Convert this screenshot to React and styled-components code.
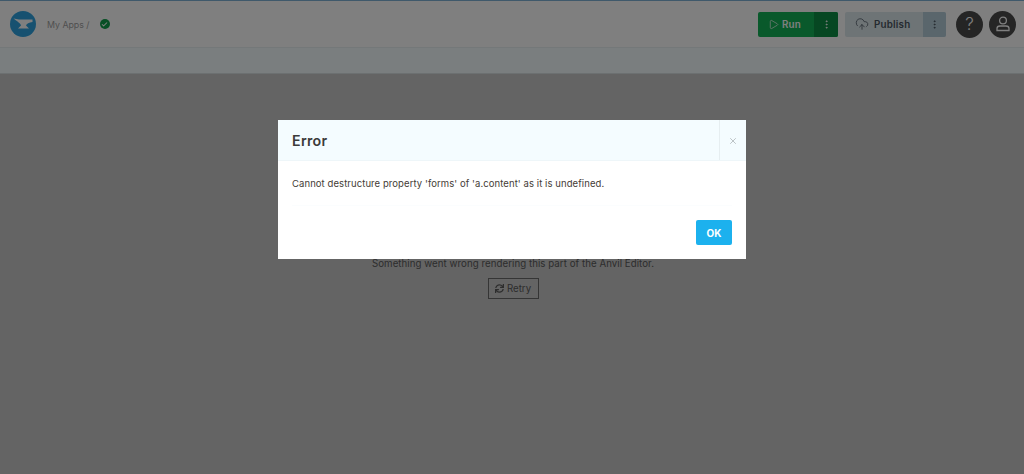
import React from "react";
import styled, { createGlobalStyle } from "styled-components";
import { Play, CloudUpload, EllipsisVertical, X, Check } from "lucide-react";
import { FaSync } from "react-icons/fa";

const GlobalStyle = createGlobalStyle`
  html, body {
    margin: 0;
    padding: 0;
    height: 100%;
    overflow: hidden;
    font-family: Inter, "Open Sans", "Liberation Sans", sans-serif;
    background: #c8c8c8;
  }
`;

const Page = styled.div`
  height: 474px;
  display: flex;
  flex-direction: column;
`;

const TopBar = styled.header`
  height: 46px;
  flex: none;
  display: flex;
  align-items: center;
  justify-content: space-between;
  padding: 0 8px 0 10px;
  background: #ffffff;
  border-top: 1px solid #7fb2d6;
`;

const LeftGroup = styled.div`
  display: flex;
  align-items: center;
`;

const Crumb = styled.span`
  margin-left: 11px;
  font-size: 8.8px;
  color: #a0a0a0;
`;

const SavedDot = styled.span`
  margin-left: 10px;
  width: 10px;
  height: 10px;
  border-radius: 50%;
  background: #10a04c;
  display: flex;
  align-items: center;
  justify-content: center;
  color: #ffffff;
`;

const RightGroup = styled.div`
  display: flex;
  align-items: center;
`;

const SplitButton = styled.div`
  display: flex;
  height: 25px;
  margin-right: ${(p) => p.$gap}px;
  border-radius: 2px;
  overflow: hidden;
  background: ${(p) => p.$bg};
  color: ${(p) => p.$fg};
`;

const MainAction = styled.div`
  width: ${(p) => p.$width}px;
  box-sizing: border-box;
  padding-left: 10px;
  display: flex;
  align-items: center;
  gap: ${(p) => p.$gap}px;
  font-size: 9.8px;
  font-weight: 600;
  letter-spacing: 0.2px;
`;

const MoreAction = styled.div`
  width: ${(p) => p.$width}px;
  display: flex;
  align-items: center;
  justify-content: center;
  background: ${(p) => p.$bg};
`;

const RoundButton = styled.div`
  width: 27px;
  height: 27px;
  margin-left: ${(p) => p.$gap}px;
  border-radius: 50%;
  background: #4a4a4a;
  color: #ffffff;
  display: flex;
  align-items: center;
  justify-content: center;
  font-size: 17px;
  font-weight: 300;
`;

const SubBar = styled.div`
  height: 25px;
  flex: none;
  background: #f4fdff;
  border-top: 1px solid #e8f0f2;
  border-bottom: 1px solid #d8e0e2;
`;

const Main = styled.main`
  flex: 1;
  display: flex;
  flex-direction: column;
  align-items: center;
  padding: 184px 0 0 2px;
  color: #5a5a5a;
`;

const Message = styled.div`
  font-size: 9.7px;
  line-height: 12px;
  letter-spacing: 0.05px;
`;

const RetryButton = styled.div`
  margin-top: 8px;
  width: 51px;
  height: 21px;
  box-sizing: border-box;
  border: 1px solid #6a6a6a;
  display: flex;
  align-items: center;
  justify-content: center;
  gap: 3px;
  font-size: 9.7px;
`;

const Backdrop = styled.div`
  position: fixed;
  inset: 0;
  background: rgba(0, 0, 0, 0.5);
  display: flex;
  justify-content: center;
  align-items: flex-start;
  padding-top: 120px;
`;

const Modal = styled.div`
  width: 468px;
  height: 139px;
  background: #ffffff;
  display: flex;
  flex-direction: column;
`;

const ModalHeader = styled.div`
  height: 41px;
  flex: none;
  box-sizing: border-box;
  display: flex;
  align-items: stretch;
  justify-content: space-between;
  background: #f4fcff;
  border-bottom: 1px solid #eef6f9;
`;

const ModalTitle = styled.h2`
  margin: 0;
  padding-left: 14px;
  align-self: center;
  font-size: 14.2px;
  font-weight: 600;
  color: #3c3b3a;
  letter-spacing: 0.3px;
`;

const CloseCell = styled.div`
  width: 27px;
  box-sizing: border-box;
  padding: 2px 1px 0 0;
  border-left: 1px solid #e6eef1;
  display: flex;
  align-items: center;
  justify-content: center;
  color: #9aa0a4;
`;

const ModalBody = styled.div`
  height: 45px;
  flex: none;
  margin: 0 14px;
  padding-top: 16px;
  box-sizing: border-box;
  font-size: 9.5px;
  line-height: 14px;
  color: #443c36;
  letter-spacing: 0.08px;
  border-bottom: 1px solid #fbfdfe;
`;

const ModalFooter = styled.div`
  flex: 1;
  display: flex;
  justify-content: flex-end;
  padding: 14px 14px 0 0;
`;

const OkButton = styled.div`
  width: 36px;
  height: 25px;
  border-radius: 2px;
  background: #1cb1ee;
  color: #ffffff;
  display: flex;
  align-items: center;
  justify-content: center;
  font-size: 10px;
  font-weight: 700;
`;

const AnvilLogo = () => (
  <svg width="26" height="26" viewBox="0 0 26 26">
    <circle cx="13" cy="13" r="13" fill="#2fa3e0" />
    <path
      d="M3.5 7.5 L9 8.5 H22.5 V11 C19 11.5 16.5 12.5 16 14.5 L19 17.5 H8 L11 14.5 C10.5 12 7 10.5 3.5 7.5 Z"
      fill="#ffffff"
    />
  </svg>
);

const UserIcon = () => (
  <svg width="18" height="18" viewBox="0 0 18 18" fill="none" stroke="#ffffff" strokeWidth="1.3">
    <circle cx="9" cy="5.5" r="3.4" />
    <path d="M3 15.5 V13.5 C3 11.8 4.5 11 6 11 H12 C13.5 11 15 11.8 15 13.5 V15.5 Z" />
  </svg>
);

const App = () => (
  <Page>
    <GlobalStyle />
    <TopBar>
      <LeftGroup>
        <AnvilLogo />
        <Crumb>My Apps /</Crumb>
        <SavedDot>
          <Check size={7} strokeWidth={3.5} />
        </SavedDot>
      </LeftGroup>
      <RightGroup>
        <SplitButton $bg="#12b256" $fg="#ffffff" $gap={7}>
          <MainAction $width={56} $gap={3}>
            <Play size={11} strokeWidth={1.5} />
            Run
          </MainAction>
          <MoreAction $width={24} $bg="#0c8f44">
            <EllipsisVertical size={11} />
          </MoreAction>
        </SplitButton>
        <SplitButton $bg="#dde8ed" $fg="#4a5560" $gap={0}>
          <MainAction $width={78} $gap={5}>
            <CloudUpload size={14} strokeWidth={1.3} />
            Publish
          </MainAction>
          <MoreAction $width={23} $bg="#b4ccd8">
            <EllipsisVertical size={11} />
          </MoreAction>
        </SplitButton>
        <RoundButton $gap={10}>?</RoundButton>
        <RoundButton $gap={6}>
          <UserIcon />
        </RoundButton>
      </RightGroup>
    </TopBar>
    <SubBar />
    <Main>
      <Message>Something went wrong rendering this part of the Anvil Editor.</Message>
      <RetryButton>
        <FaSync size={9} />
        Retry
      </RetryButton>
    </Main>
    <Backdrop>
      <Modal>
        <ModalHeader>
          <ModalTitle>Error</ModalTitle>
          <CloseCell>
            <X size={10} strokeWidth={1.5} />
          </CloseCell>
        </ModalHeader>
        <ModalBody>Cannot destructure property 'forms' of 'a.content' as it is undefined.</ModalBody>
        <ModalFooter>
          <OkButton>OK</OkButton>
        </ModalFooter>
      </Modal>
    </Backdrop>
  </Page>
);

export default App;
